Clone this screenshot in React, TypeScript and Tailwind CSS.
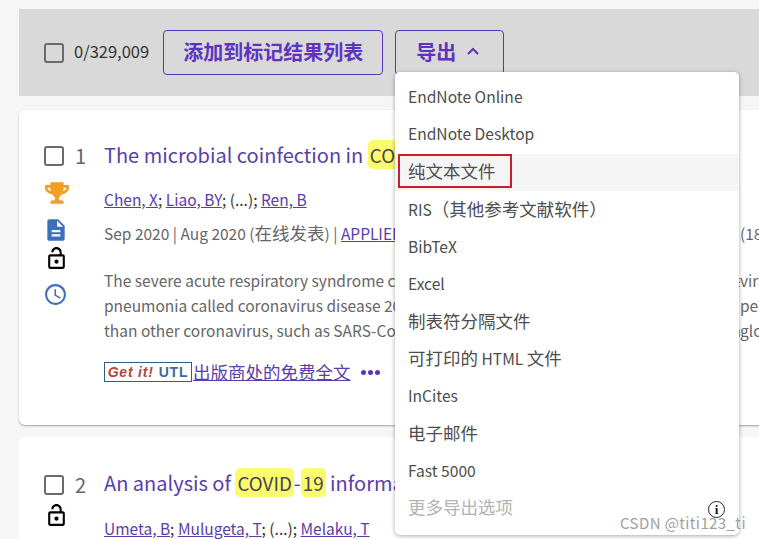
import type { ReactNode } from 'react';
import { FaTrophy } from 'react-icons/fa';
import { MdDescription, MdOutlineLockOpen, MdOutlineAccessTime } from 'react-icons/md';

// the page's CJK fallback renders larger than its latin text
function Cn({ children }: { children: string }) {
  return <span className="text-[17.5px]">{children}</span>;
}

const menuItems: { id: string; label: ReactNode }[] = [
  { id: 'online', label: 'EndNote Online' },
  { id: 'desktop', label: 'EndNote Desktop' },
  { id: 'plain', label: <Cn>纯文本文件</Cn> },
  { id: 'ris', label: <>RIS<Cn>（其他参考文献软件）</Cn></> },
  { id: 'bibtex', label: 'BibTeX' },
  { id: 'excel', label: 'Excel' },
  { id: 'tab', label: <Cn>制表符分隔文件</Cn> },
  { id: 'html', label: <><Cn>可打印的</Cn> HTML <Cn>文件</Cn></> },
  { id: 'incites', label: 'InCites' },
  { id: 'email', label: <Cn>电子邮件</Cn> },
  { id: 'fast', label: 'Fast 5000' },
];

const abstractLines = [
  ['The severe acute respiratory syndrome coronavirus 2 (SARS-CoV-2) is a novel coronavirus that caused a', 'viral'],
  ['pneumonia called coronavirus disease 2019 (COVID-19), and it has spread faster with a higher rate of', 'pe'],
  ['than other coronavirus, such as SARS-CoV and MERS-CoV, and has caused a serious threat to the', 'glob'],
];

function Checkbox() {
  return <span className="block w-[20px] h-[20px] flex-shrink-0 rounded-[3px] border-2 border-[#6b6b6b] bg-transparent" />;
}

function Mark({ children }: { children: string }) {
  return <span className="bg-[#fbfb6e] text-[#4a4453] text-[18.8px] rounded-[5px] py-px px-[2px]">{children}</span>;
}

export default function App() {
  return (
    <div
      className="relative w-[759px] h-[539px] overflow-hidden bg-[#f6f6f6] pt-[9px] pl-[19px]"
      style={{ fontFamily: '"Noto Sans CJK SC", "Noto Sans", sans-serif' }}
    >
      {/* Toolbar */}
      <div className="flex items-center h-[87px] bg-[#d9d9d9] pl-[25px]">
        <Checkbox />
        <span className="ml-[10px] pb-[2px] text-[16.5px] text-[#333]">0/329,009</span>
        <button className="ml-[14px] w-[220px] h-[45px] pb-[2px] rounded-[4px] border border-[#5e33bf] text-[20px] font-bold text-[#5e33bf]">
          添加到标记结果列表
        </button>
        <button className="ml-[12px] w-[109px] h-[45px] pb-[2px] rounded-[4px] border border-[#5e33bf] text-[20px] font-bold text-[#5e33bf] flex items-center pl-[20px] gap-[10px]">
          导出
          <svg width="14" height="9" viewBox="0 0 14 9" fill="none" stroke="#5e33bf" strokeWidth="2">
            <path d="M2 7l5-5 5 5" />
          </svg>
        </button>
      </div>

      {/* Record 1 */}
      <div className="mt-[14px] h-[315px] w-[800px] bg-white rounded-[6px] shadow-[0_1px_2px_rgba(0,0,0,0.35)] flex pl-[25px] pt-[36px]">
        <div className="w-[60px] flex-shrink-0">
          <div className="flex items-center gap-[11px] h-[20px]">
            <Checkbox />
            <span className="text-[20px] text-[#666]">1</span>
          </div>
          <FaTrophy className="mt-[15px] text-[#f0a024] text-[24px] ml-[1px]" />
          <MdDescription className="mt-[12px] text-[#3f6fbb] text-[26px] -ml-[1px]" />
          <MdOutlineLockOpen className="mt-[3px] text-black text-[25px]" />
          <MdOutlineAccessTime className="mt-[11px] text-[#3f6fbb] text-[25px] -ml-[1px]" />
        </div>
        <div className="whitespace-nowrap">
          <div className="-mt-[7px] text-[20px] leading-[32px] text-[#5a3ea8]">
            The microbial coinfection in <Mark>COVID-19</Mark>
          </div>
          <div className="mt-[16px] text-[15.5px] leading-[24px] text-[#333]">
            <a className="underline text-[#5a3ea8]">Chen, X</a>; <a className="underline text-[#5a3ea8]">Liao, BY</a>; (...); <a className="underline text-[#5a3ea8]">Ren, B</a>
          </div>
          <div className="mt-[10px] text-[15.5px] leading-[24px] text-[#666] flex">
            <span className="w-[636px] overflow-hidden">Sep 2020 | Aug 2020 (<Cn>在线发表</Cn>) | <a className="underline text-[#5a3ea8]">APPLIED MICROBIOLOGY AND BIOTECHNOLOGY</a></span>
            <span>(18</span>
          </div>
          <div className="mt-[23px] text-[15.5px] leading-[25px] text-[#666]">
            {abstractLines.map(([text, tail]) => (
              <div key={tail} className="flex">
                <span className="w-[636px] overflow-hidden">{text}</span>
                <span>{tail}</span>
              </div>
            ))}
          </div>
          <div className="mt-[17px] flex items-center">
            <span
              className="flex items-center justify-center w-[88px] h-[20px] border border-[#2f6080] text-[14px] font-bold tracking-[0.8px] gap-[5px]"
              style={{ fontFamily: '"Liberation Sans", sans-serif' }}
            >
              <i className="text-[#b4463c]">Get it!</i>
              <span className="text-[#3f6a9e]">UTL</span>
            </span>
            <a className="ml-[1px] text-[17.5px] leading-[24px] underline text-[#5a3ea8]">出版商处的免费全文</a>
            <span className="ml-[10px] flex gap-[2px]">
              <span className="w-[5px] h-[5px] rounded-full bg-[#5e33bf]" />
              <span className="w-[5px] h-[5px] rounded-full bg-[#5e33bf]" />
              <span className="w-[5px] h-[5px] rounded-full bg-[#5e33bf]" />
            </span>
          </div>
        </div>
      </div>

      {/* Record 2 */}
      <div className="mt-[12px] h-[200px] w-[800px] bg-white rounded-[6px] flex pl-[25px] pt-[38px]">
        <div className="w-[60px] flex-shrink-0">
          <div className="flex items-center gap-[11px] h-[20px]">
            <Checkbox />
            <span className="text-[20px] text-[#666]">2</span>
          </div>
          <MdOutlineLockOpen className="mt-[8px] text-black text-[25px]" />
        </div>
        <div className="whitespace-nowrap">
          <div className="-mt-[8px] text-[20px] leading-[32px] text-[#5a3ea8]">
            An analysis of <Mark>COVID</Mark>-<Mark>19</Mark> information
          </div>
          <div className="mt-[17px] text-[15.5px] leading-[24px] text-[#333]">
            <a className="underline text-[#5a3ea8]">Umeta, B</a>; <a className="underline text-[#5a3ea8]">Mulugeta, T</a>; (...); <a className="underline text-[#5a3ea8]">Melaku, T</a>
          </div>
        </div>
      </div>

      {/* Export menu */}
      <div className="absolute left-[395px] top-[72px] w-[344px] h-[463px] bg-white rounded-[5px] shadow-[0_1px_4px_rgba(0,0,0,0.35)] pt-[7px]">
        {menuItems.map((item, i) => (
          <div
            key={item.id}
            className={`h-[37.4px] pl-[13px] pb-[2px] flex items-center whitespace-pre text-[15.6px] text-[#4d4d4d] ${i === 2 ? 'bg-[#f5f5f5]' : ''}`}
          >
            <span>{item.label}</span>
          </div>
        ))}
        <div className="h-[37px] pl-[13px] pb-[3px] flex items-center text-[#b3b3b3]"><Cn>更多导出选项</Cn></div>
        <div className="absolute left-[313px] top-[429px] w-[17px] h-[17px] rounded-full border border-[#222] flex items-center justify-center text-[13px] font-bold text-[#111] leading-none" style={{ fontFamily: '"Liberation Serif", serif' }}>
          i
        </div>
        <div className="absolute left-[3px] top-[82px] w-[114px] h-[34px] border-2 border-[#c8202a]" />
      </div>

      {/* Watermark */}
      <div className="absolute left-[620px] top-[514px] text-[15px] leading-[18px] tracking-[0.4px] text-[#a0a0a0]">CSDN @titi123_ti</div>
    </div>
  );
}
